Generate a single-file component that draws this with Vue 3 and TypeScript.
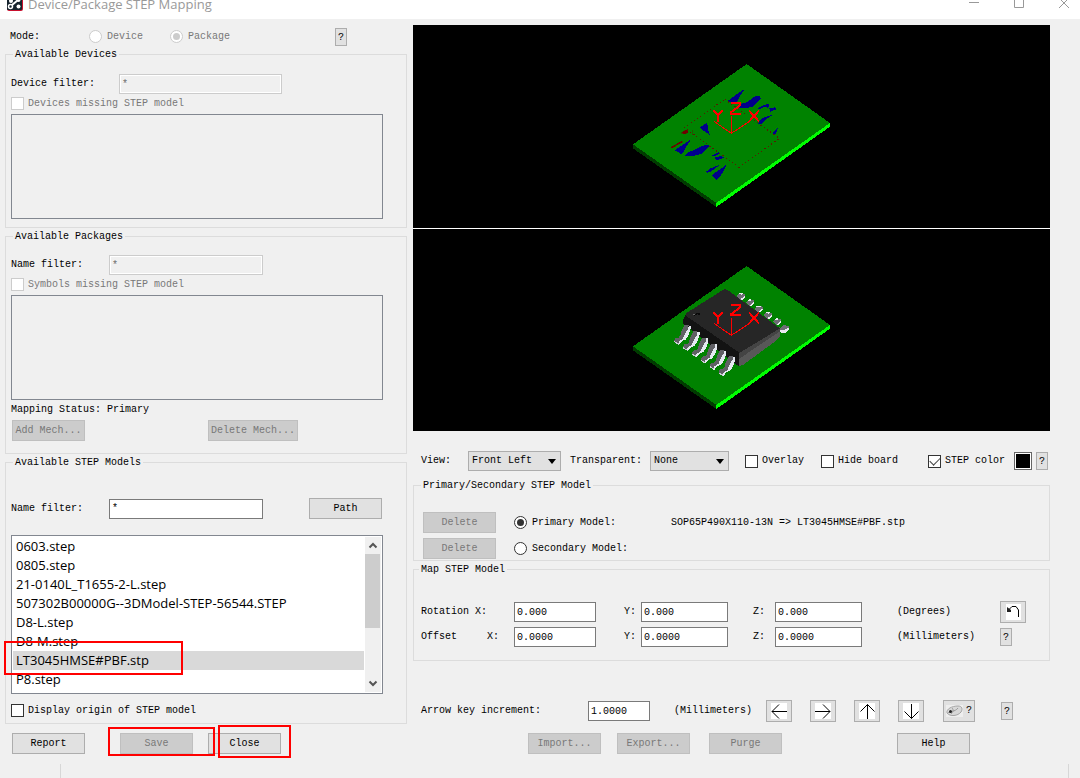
<script setup lang="ts">
import { ref } from 'vue'

const stepModels: string[] = [
  '0603.step',
  '0805.step',
  '21-0140L_T1655-2-L.step',
  '507302B00000G--3DModel-STEP-56544.STEP',
  'D8-L.step',
  'D8-M.step',
  'LT3045HMSE#PBF.stp',
  'P8.step',
]
const selectedModel = ref('LT3045HMSE#PBF.stp')
const modelFilter = ref('*')
const displayOrigin = ref(false)
const viewSide = ref('Front Left')
const transparent = ref('None')
const overlay = ref(false)
const hideBoard = ref(false)
const stepColor = ref(true)
const modelSlot = ref('primary')
const rotation = ref({ x: '0.000', y: '0.000', z: '0.000' })
const offset = ref({ x: '0.0000', y: '0.0000', z: '0.0000' })
const offsetLabel = 'Offset     X:'
const increment = ref('1.0000')

const arrows = [
  { name: 'Left', d: 'M19 10.5H4M11 3.5L4 10.5L11 17.5' },
  { name: 'Right', d: 'M3 10.5H18M11 3.5L18 10.5L11 17.5' },
  { name: 'Up', d: 'M11.5 18V3.5M4.5 10.5L11.5 3.5L18.5 10.5' },
  { name: 'Down', d: 'M11.5 3V17.5M4.5 10.5L11.5 17.5L18.5 10.5' },
]
const frontLeads = [0, 1, 2, 3, 4, 5].map((i) => `translate(${i * 26.6} ${i * 18.8})`)
const backLeads = [0, 1, 2, 3, 4].map((i) => `translate(${i * 27} ${i * 19})`)
</script>

<template>
  <div class="window">
    <header class="titlebar">
      <svg class="app-icon" viewBox="0 0 16 16" aria-hidden="true">
        <rect width="16" height="16" rx="2" fill="#c8102e" />
        <rect x="0" y="0" width="15" height="15" rx="1" fill="#16232d" />
        <path d="M5 10L11 5" stroke="#fff" stroke-width="2" />
        <circle cx="3.500" cy="11.500" r="2" fill="none" stroke="#fff" stroke-width="1.500" />
        <circle cx="11.500" cy="11.500" r="2" fill="#fff" />
        <circle cx="4" cy="6" r="2" fill="#fff" />
        <circle cx="11.500" cy="5" r="2" fill="#fff" />
      </svg>
      <h1>Device/Package STEP Mapping</h1>
      <div class="caption-buttons">
        <button type="button" aria-label="Minimize"><svg viewBox="0 0 12 12"><path d="M1 5.500H11" /></svg></button>
        <button type="button" aria-label="Maximize"><svg viewBox="0 0 12 12"><path d="M1.500 1.500H10.500V10.500H1.500Z" /></svg></button>
        <button type="button" aria-label="Close window"><svg viewBox="0 0 12 12"><path d="M1 1L11 11M11 1L1 11" /></svg></button>
      </div>
    </header>

    <main class="body">
      <section class="left">
        <div class="row mode">
          <span class="mode-label">Mode:</span>
          <label class="check dim mode-device"><input type="radio" name="mode" disabled />Device</label>
          <label class="check dim mode-package"><input type="radio" name="mode" checked disabled />Package</label>
          <button type="button" class="q">?</button>
        </div>

        <fieldset>
          <legend>Available Devices</legend>
          <div class="row field wide">
            <label for="device-filter">Device filter:</label>
            <input id="device-filter" type="text" value="*" disabled />
          </div>
          <label class="check dim line"><input type="checkbox" disabled />Devices missing STEP model</label>
          <div class="listbox empty" role="listbox" aria-label="Available Devices"></div>
        </fieldset>

        <fieldset class="packages">
          <legend>Available Packages</legend>
          <div class="row field">
            <label for="package-filter">Name filter:</label>
            <input id="package-filter" type="text" value="*" disabled />
          </div>
          <label class="check dim line"><input type="checkbox" disabled />Symbols missing STEP model</label>
          <div class="listbox empty" role="listbox" aria-label="Available Packages"></div>
          <div class="row status">Mapping Status: Primary</div>
          <div class="row mech">
            <button type="button" class="btn" disabled>Add Mech...</button>
            <button type="button" class="btn long" disabled>Delete Mech...</button>
          </div>
        </fieldset>

        <fieldset class="models">
          <legend>Available STEP Models</legend>
          <div class="row field">
            <label for="model-filter">Name filter:</label>
            <input id="model-filter" v-model="modelFilter" type="text" />
            <button type="button" class="btn path">Path</button>
          </div>
          <div class="listbox full">
            <ul role="listbox" aria-label="Available STEP Models">
              <li
                v-for="m in stepModels"
                :key="m"
                role="option"
                :aria-selected="m === selectedModel"
                :class="{ selected: m === selectedModel }"
                @click="selectedModel = m"
              >
                {{ m }}
              </li>
            </ul>
            <div class="scrollbar" aria-hidden="true">
              <svg viewBox="0 0 16 17"><path d="M4.500 10.500L8 7L11.500 10.500" /></svg>
              <div class="thumb"></div>
              <svg viewBox="0 0 16 17"><path d="M4.500 6.500L8 10L11.500 6.500" /></svg>
            </div>
            <span class="mark mark-model"></span>
          </div>
          <label class="check line"><input v-model="displayOrigin" type="checkbox" />Display origin of STEP model</label>
        </fieldset>

        <div class="row actions">
          <button type="button" class="btn">Report</button>
          <span class="anchor save"><button type="button" class="btn" disabled>Save</button><span class="mark mark-save"></span></span>
          <span class="anchor close"><button type="button" class="btn">Close</button><span class="mark mark-close"></span></span>
        </div>
      </section>

      <section class="right">
        <div class="viewer">
          <svg viewBox="-621 -90 1911 609" shape-rendering="crispEdges" role="img" aria-label="Board footprint">
            <path d="M39 268L289 444V456L39 280Z" fill="#003c00" />
            <path d="M289 444L630 204V215L289 456Z" fill="#0f0" />
            <path d="M380 27L630 204L289 444L39 268Z" fill="#008200" />
            <g fill="#00008b">
              <path d="M375 101L343 123L323 138L330 142L348 147L360 122Z" />
              <path d="M408 122H418L423 130L400 154L378 160H354L362 147L382 141Z" />
              <path d="M448 146L430 151L412 161H422L436 155L448 157Z" />
              <path d="M440 157L458 160L464 155L470 163L448 171L452 164Z" />
              <path d="M460 178L425 190L414 206H424L440 192Z" />
              <path d="M474 219L456 235L468 237Z" />
              <path d="M262 203L239 217L246 224L270 240L264 225Z" />
              <path d="M213 253L180 275L165 286L173 291L186 298L199 274Z" />
              <path d="M257 269H267V275L243 297L215 304H193L206 292L236 278Z" />
              <path d="M296 292L270 304H280L296 298Z" />
              <path d="M284 308L302 303L312 308L290 316Z" />
              <path d="M302 328L270 341L258 350L262 354L275 348Z" />
              <path d="M321 328L290 350L274 361L280 367L290 376L306 356Z" />
            </g>
            <path d="M153 276L186 258V263L155 279ZM183 234L198 225L205 232L197 237ZM216 225V240" fill="#700000" stroke="#600" />
            <path d="M314 133L478 250L357 337L193 218Z" fill="none" stroke="#561b00" stroke-width="3" stroke-dasharray="4 8" />
            <g fill="none" stroke="#f00">
              <path d="M334 183V236M282 199L334 235L389 199" stroke-width="3" />
              <path d="M281 166L294 180L307 166M294 180V201M333 144H361V151L334 171V176H362M387 166L417 200M417 166L387 200" stroke-width="6" />
            </g>
          </svg>
          <svg viewBox="-621 -93 1911 606" shape-rendering="crispEdges" role="img" aria-label="Board with STEP model">
            <path d="M39 259L289 435V447L39 271Z" fill="#003c00" />
            <path d="M289 435L630 195V206L289 447Z" fill="#0f0" />
            <path d="M380 18L630 195L289 435L39 259Z" fill="#008200" />
            <g v-for="t in backLeads" :key="t" :transform="t">
              <path d="M350 109L360 99L374 102L375 111L361 119Z" fill="#6d6d73" />
              <path d="M362 117L375 107V112L366 120ZM354 102L360 99L370 100L364 104Z" fill="#e8eaf0" />
            </g>
            <path d="M482 202L494 194L507 200V208L496 218H482L476 211Z" fill="#6d6d73" />
            <path d="M477 209L490 211L507 202V209L496 218H482Z" fill="#e8eaf0" />
            <path d="M358 279L479 201L481 229L470 241L370 314L358 319Z" fill="#585858" />
            <path d="M358 275L466 202L480 207V214L358 296Z" fill="#444" />
            <path d="M313 87L321 89L480 205L358 279L196 168L198 160Z" fill="#262626" />
            <path d="M196 166L358 278V319L342 309L190 191V177Z" fill="#131313" />
            <path d="M220 163L239 158L241 166L232 162L222 169Z" fill="#090909" />
            <path d="M219 164L231 159L224 166Z" fill="#666" />
            <g v-for="t in frontLeads" :key="t" :transform="t">
              <path d="M194 195H206L204 208L190 240L180 245L176 253L163 247V241L168 233H176L181 226L184 214Z" fill="#606065" />
              <path d="M206 197H212V206L207 222L198 238L186 243L177 254H173L177 244L189 236L197 217L205 205Z" fill="#e5e9f1" />
              <path d="M163 243L176 250V254L163 247Z" fill="#c8cbd2" />
            </g>
            <g fill="none" stroke="#f00">
              <path d="M334 174V227M282 190L334 226L389 190" stroke-width="3" />
              <path d="M281 157L294 171L307 157M294 171V192M333 135H361V142L334 162V166H362M387 157L417 191M417 157L387 191" stroke-width="6" />
            </g>
          </svg>
        </div>

        <div class="row view-controls">
          <label for="view-side" class="w-view">View:</label>
          <span class="dropdown view-select">
            <select id="view-side" v-model="viewSide"><option>Front Left</option><option>Front Right</option></select>
            <svg viewBox="0 0 8 5"><path d="M0 0H8L4 5Z" /></svg>
          </span>
          <label for="transparent" class="w-transparent">Transparent:</label>
          <span class="dropdown transparent-select">
            <select id="transparent" v-model="transparent"><option>None</option><option>Board</option></select>
            <svg viewBox="0 0 8 5"><path d="M0 0H8L4 5Z" /></svg>
          </span>
          <label class="check overlay"><input v-model="overlay" type="checkbox" />Overlay</label>
          <label class="check hide-board"><input v-model="hideBoard" type="checkbox" />Hide board</label>
          <label class="check step-color"><input v-model="stepColor" type="checkbox" />STEP color</label>
          <button type="button" class="swatch" aria-label="Choose STEP color"></button>
          <button type="button" class="q">?</button>
        </div>

        <fieldset class="slots">
          <legend>Primary/Secondary STEP Model</legend>
          <div class="row slot">
            <button type="button" class="btn" disabled>Delete</button>
            <label class="check"><input v-model="modelSlot" type="radio" name="slot" value="primary" />Primary Model:</label>
            <output>SOP65P490X110-13N =&gt; LT3045HMSE#PBF.stp</output>
          </div>
          <div class="row slot">
            <button type="button" class="btn" disabled>Delete</button>
            <label class="check"><input v-model="modelSlot" type="radio" name="slot" value="secondary" />Secondary Model:</label>
          </div>
        </fieldset>

        <fieldset class="mapping">
          <legend>Map STEP Model</legend>
          <div class="axes">
            <label for="rx">Rotation X:</label><input id="rx" v-model="rotation.x" type="text" />
            <label for="ry" class="axis">Y:</label><input id="ry" v-model="rotation.y" type="text" />
            <label for="rz" class="axis far">Z:</label><input id="rz" v-model="rotation.z" type="text" />
            <span class="unit">(Degrees)</span>
            <button type="button" class="icon-btn" aria-label="Undo">
              <svg viewBox="0 0 22 20"><rect x="4" y="2" width="15" height="16" /><path d="M7 7.500L10 4.500H14L16.500 8V15" /><path d="M5 5V10H9V8Z" class="solid" /></svg>
            </button>
          </div>
          <div class="axes">
            <label for="ox" class="spaced">{{ offsetLabel }}</label><input id="ox" v-model="offset.x" type="text" />
            <label for="oy" class="axis">Y:</label><input id="oy" v-model="offset.y" type="text" />
            <label for="oz" class="axis far">Z:</label><input id="oz" v-model="offset.z" type="text" />
            <span class="unit">(Millimeters)</span>
            <button type="button" class="q">?</button>
          </div>
        </fieldset>

        <div class="row nudge">
          <label for="increment">Arrow key increment:</label>
          <input id="increment" v-model="increment" type="text" />
          <span>(Millimeters)</span>
          <div class="arrows">
            <button v-for="a in arrows" :key="a.name" type="button" class="icon-btn" :aria-label="a.name">
              <svg viewBox="0 0 22 20"><rect x="3" y="2" width="16" height="16" /><path :d="a.d" /></svg>
            </button>
          </div>
          <button type="button" class="icon-btn mouse" aria-label="Mouse help">
            <svg viewBox="0 0 17 12">
              <rect width="17" height="12" />
              <path d="M1 8C0 4 6 1 12 1C16 1 17 4 15 7C12 11 4 12 1 8Z" class="shell" />
              <path d="M2 8C4 6 9 7 12 3M6 3C8 5 7 7 5 9" class="seam" />
              <circle cx="4.500" cy="6.500" r="1.500" class="solid" />
            </svg>
            ?
          </button>
          <button type="button" class="q last">?</button>
        </div>

        <div class="row files">
          <button type="button" class="btn" disabled>Import...</button>
          <button type="button" class="btn export" disabled>Export...</button>
          <button type="button" class="btn purge" disabled>Purge</button>
          <button type="button" class="btn help">Help</button>
        </div>
      </section>
    </main>
    <footer class="statusbar"></footer>
  </div>
</template>

<style>
body {
  margin: 0;
  background: #f0f0f0;
}
</style>

<style scoped>
* {
  box-sizing: border-box;
}
.window {
  min-height: 100vh;
  overflow: hidden;
  display: flex;
  flex-direction: column;
  background: #f0f0f0;
  color: #000;
  font: 10px/18px 'Liberation Mono', 'DejaVu Sans Mono', monospace;
  white-space: nowrap;
}
button,
input,
select {
  font: inherit;
  color: inherit;
  margin: 0;
  border-radius: 0;
}
.titlebar {
  height: 19px;
  flex: none;
  overflow: hidden;
  display: flex;
  align-items: flex-end;
  padding: 0 10px 0 7px;
  background: #fff;
  color: #999;
}
.app-icon {
  width: 16px;
  height: 16px;
  margin: 0 5px 8px 0;
  flex: none;
}
h1 {
  margin: 0 0 5px;
  font: 13px/20px 'Open Sans', 'Noto Sans', sans-serif;
}
.caption-buttons {
  display: flex;
  gap: 33px;
  margin: 0 0 10px auto;
}
.caption-buttons button {
  width: 12px;
  height: 12px;
  padding: 0;
  border: 0;
  background: none;
}
.caption-buttons svg {
  display: block;
  fill: none;
  stroke: #999;
}
.body {
  display: grid;
  grid-template-columns: 402px minmax(0, 1fr);
  column-gap: 6px;
  padding: 0 30px 0 5px;
}
.row {
  display: flex;
  align-items: center;
}
.mode {
  height: 27px;
  padding: 9px 0 1px 5px;
}
.mode-label {
  width: 79px;
}
.mode-device {
  width: 81px;
}
.mode-package {
  width: 165px;
}
fieldset {
  min-width: 0;
  margin: 0;
  padding: 12px 23px 8px 5px;
  border: 1px solid #dcdcdc;
}
legend {
  margin-left: 2px;
  padding: 0 2px;
  height: 16px;
}
.packages {
  padding-top: 11px;
  padding-bottom: 12px;
}
.models {
  padding-top: 28px;
  padding-bottom: 2px;
}
.field label {
  width: 98px;
}
.field input {
  width: 154px;
}
.wide label {
  width: 108px;
}
.wide input {
  width: 163px;
}
input[type='text'] {
  height: 20px;
  min-width: 0;
  padding: 0 2px;
  border: 1px solid #7a7a7a;
  background: #fff;
  outline: none;
}
input[type='text']:disabled {
  border-color: #ccc;
  background: #f0f0f0;
  box-shadow: inset 0 0 0 1px #fff;
  color: #6d6d6d;
}
.check {
  display: flex;
  align-items: center;
}
.check.dim {
  color: #787878;
}
.line {
  height: 20px;
  padding-bottom: 1px;
}
.check input {
  appearance: none;
  position: relative;
  flex: none;
  width: 13px;
  height: 13px;
  margin-right: 4px;
  border: 1px solid #333;
  background: #fff;
}
.check input[type='radio'] {
  border-radius: 50%;
  margin-right: 5px;
}
.check input:disabled {
  border-color: #ccc;
}
.check input[type='radio']:checked::after {
  content: '';
  position: absolute;
  inset: 2px;
  border-radius: 50%;
  background: #333;
}
.check input[type='radio']:disabled:checked::after {
  background: #ccc;
}
.check input[type='checkbox']:checked::after {
  content: '';
  position: absolute;
  left: 1px;
  top: 1px;
  width: 9px;
  height: 5px;
  border: solid #444;
  border-width: 0 0 1px 1px;
  transform: rotate(-45deg);
}
.listbox {
  border: 1px solid #828790;
}
.empty {
  height: 105px;
}
.full {
  position: relative;
  display: flex;
  height: 159px;
  margin: 16px 0 7px;
  padding: 1px;
  background: #fff;
}
ul {
  flex: 1;
  margin: 0 1px 0 0;
  padding: 0;
  list-style: none;
  font: 13px/19px 'Open Sans', 'Noto Sans', sans-serif;
}
li {
  height: 19px;
  padding-left: 3px;
}
li.selected {
  background: #d9d9d9;
}
.scrollbar {
  width: 16px;
  display: flex;
  flex-direction: column;
  justify-content: space-between;
  background: #f0f0f0;
}
.scrollbar svg {
  display: block;
  height: 17px;
  fill: none;
  stroke: #555;
  stroke-width: 2;
}
.thumb {
  height: 74px;
  margin-bottom: auto;
  margin-right: 1px;
  background: #cdcdcd;
}
.status {
  height: 20px;
}
.btn {
  width: 73px;
  height: 21px;
  padding: 0;
  flex: none;
  border: 1px solid #adadad;
  background: #e1e1e1;
  text-align: center;
}
.btn:disabled {
  border-color: #bfbfbf;
  background: #ccc;
  color: #787878;
}
.mech .btn {
  margin-left: 1px;
}
.mech .long {
  width: 90px;
  margin-left: 123px;
}
.path {
  margin-left: 46px;
}
.q {
  width: 12px;
  height: 18px;
  padding: 0;
  flex: none;
  border: 1px solid #adadad;
  background: #e1e1e1;
}
.actions {
  padding: 9px 0 0 7px;
}
.anchor {
  position: relative;
  display: flex;
}
.save {
  margin-left: 35px;
}
.close {
  margin-left: 15px;
}
.mark {
  position: absolute;
  border: 2px solid #f00;
  pointer-events: none;
}
.mark-model {
  left: -8px;
  top: 105px;
  width: 179px;
  height: 34px;
}
.mark-save {
  left: -12px;
  top: -6px;
  width: 107px;
  height: 29px;
  z-index: 1;
}
.mark-close {
  left: 10px;
  top: -8px;
  width: 73px;
  height: 33px;
}
.right {
  padding-top: 6px;
}
.viewer {
  background: #000;
}
.viewer svg {
  display: block;
  width: 100%;
  height: 203px;
}
.viewer svg + svg {
  border-top: 1px solid #fff;
}
.view-controls {
  height: 20px;
  margin: 20px 2px 6px 8px;
}
.w-view {
  width: 47px;
}
.w-transparent {
  width: 80px;
  margin-left: 9px;
}
.dropdown {
  position: relative;
  display: flex;
}
.dropdown select {
  appearance: none;
  width: 100%;
  height: 20px;
  padding: 0 3px;
  border: 1px solid #adadad;
  background: #e1e1e1;
}
.dropdown svg {
  position: absolute;
  right: 5px;
  top: 8px;
  width: 8px;
  height: 5px;
  pointer-events: none;
}
.view-select {
  width: 93px;
}
.transparent-select {
  width: 79px;
}
.overlay {
  margin-left: 16px;
  width: 76px;
}
.hide-board {
  width: 107px;
}
.step-color {
  margin-right: auto;
}
.swatch {
  width: 18px;
  height: 18px;
  margin-right: 4px;
  padding: 0;
  border: 1px solid #666;
  background: #000;
  box-shadow: inset 0 0 0 1px #fff;
}
.slots {
  padding: 19px 9px 1px;
}
.slots legend,
.mapping legend {
  margin-left: -2px;
}
.slot {
  height: 21px;
}
.slot + .slot {
  margin-top: 5px;
}
.slot .check {
  width: 157px;
  margin-left: 18px;
}
.mapping {
  padding: 24px 8px 12px 7px;
}
.axes {
  display: grid;
  grid-template-columns: 93px 82px 45px 87px 47px 87px 138px 26px;
  align-items: center;
  height: 22px;
}
.axes + .axes {
  margin-top: 3px;
}
.axes .axis {
  padding-right: 5px;
  text-align: right;
}
.axes .far {
  padding-right: 10px;
}
.axes .unit {
  padding-left: 35px;
}
.spaced {
  white-space: pre;
}
.icon-btn {
  display: flex;
  align-items: center;
  justify-content: center;
  width: 26px;
  height: 22px;
  padding: 0;
  flex: none;
  border: 1px solid #adadad;
  background: #e1e1e1;
}
.icon-btn svg {
  width: 22px;
  height: 20px;
  fill: none;
  stroke: #000;
}
.icon-btn rect {
  fill: #fff;
  stroke: none;
}
.icon-btn .solid {
  fill: #222;
  stroke: none;
}
.nudge {
  height: 22px;
  margin: 39px 0 11px 8px;
}
.nudge label {
  width: 167px;
}
.nudge > input {
  width: 62px;
  margin-right: 24px;
}
.arrows {
  display: flex;
  gap: 18px;
  margin-left: 14px;
}
.mouse {
  width: 32px;
  margin-left: 19px;
  gap: 3px;
}
.mouse svg {
  width: 17px;
  height: 12px;
}
.mouse rect {
  fill: #eee;
}
.mouse .shell {
  fill: #d8d8d8;
  stroke: #a5a5a5;
}
.mouse .seam {
  stroke: #999;
}
.last {
  margin-left: 26px;
}
.files {
  padding-left: 115px;
}
.export {
  margin-left: 16px;
}
.purge {
  margin-left: 19px;
}
.help {
  margin-left: 115px;
}
.statusbar {
  flex: 1;
  margin: 10px 11px 0 60px;
  border: solid #d7d7d7;
  border-width: 0 1px;
}
</style>
